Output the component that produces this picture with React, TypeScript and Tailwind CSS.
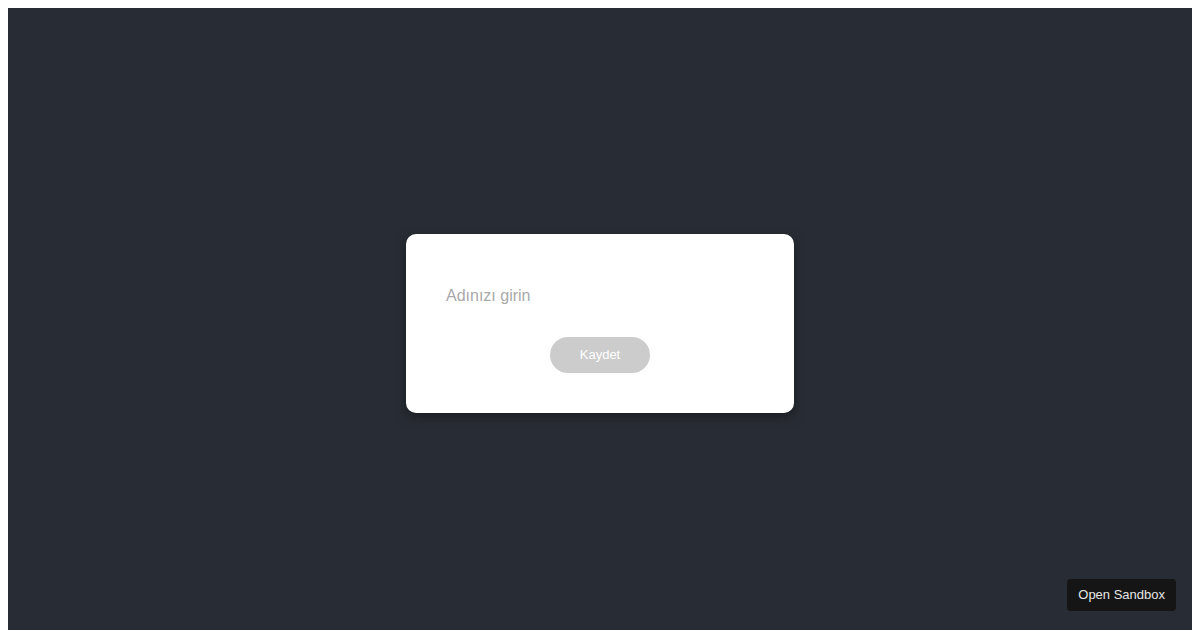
import React, { useState } from 'react';

const App: React.FC = () => {
  const [name, setName] = useState('');

  return (
    <div className="bg-white p-2 font-['Liberation_Sans',Arial,sans-serif]">
      <div className="relative h-[630px] bg-[#282c34] flex items-center justify-center">
        <div className="w-[388px] bg-white rounded-[10px] px-10 pt-10 pb-10 shadow-[0_4px_12px_rgba(0,0,0,0.35)] flex flex-col items-center">
          <input
            value={name}
            onChange={(e) => setName(e.target.value)}
            placeholder="Adınızı girin"
            className="w-full h-[45px] mb-[18px] text-base text-[#333] placeholder:text-[#a9a9a9] outline-none bg-transparent"
          />
          <button className="w-[100px] h-9 rounded-full bg-[#cccccc] text-white text-[13px]">
            Kaydet
          </button>
        </div>
        <button className="absolute right-4 bottom-[27px] h-8 px-[11px] rounded bg-[#151515] text-[#e6e6e6] text-[13px]">
          Open Sandbox
        </button>
      </div>
    </div>
  );
};

export default App;
